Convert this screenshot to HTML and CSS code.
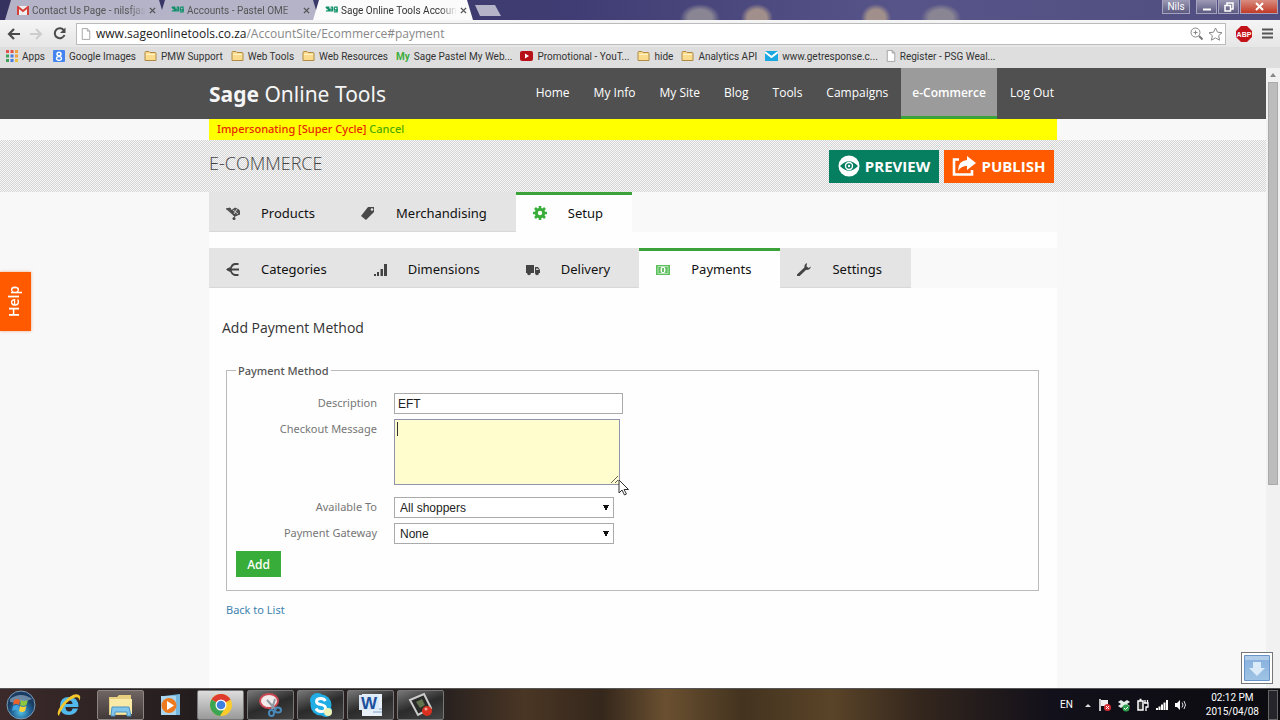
FILE: index.html
```
<!DOCTYPE html>
<html lang="en">
<head>
    <meta charset="UTF-8">
    <meta name="viewport" content="width=device-width, initial-scale=1.0">
    <title>Sage Online Tools Accounts</title>
    <link rel="stylesheet" href="styles.css">
</head>
<body>
    <!-- shared icons -->
    <svg class="hidden">
        <symbol id="folder" viewBox="0 0 12 12"><path d="M.5 10.500V2.500q0-1 1-1h3l1 1h5q1 0 1 1v7z" fill="#fadc8c" stroke="#b08a45"/><path d="M1.500 4.500h9" stroke="#fff3c4"/></symbol>
        <symbol id="doc" viewBox="0 0 12 14"><path d="M1.500.5h6l3 3v10h-9zM7.500.5v3h3" fill="#fff" stroke="#999"/></symbol>
        <symbol id="sage" viewBox="0 0 14 8"><path d="M1 1h3v1H2l2 1.500V5H1M6 1h2v4H5V3h3M10 1h3v5H9.500M12 4h-2V1M14 4h-3" fill="none" stroke="#109068" stroke-width="1.400"/></symbol>
        <symbol id="close" viewBox="0 0 8 8"><path d="M1 1l6 6M7 1L1 7" stroke="#555" stroke-width="1.600"/></symbol>
    </svg>

    <!-- browser tabs -->
    <div class="tab-strip">
        <div class="browser-tab">
            <svg width="12" height="9" viewBox="0 0 12 9"><path d="M0 0h12v9H0z" fill="#eee"/><path d="M1 9V1l5 4 5-4v8" fill="none" stroke="#d5403a" stroke-width="2"/></svg>
            <span class="tab-title">Contact Us Page - nilsfjas</span>
            <button class="tab-close" aria-label="Close tab"><svg width="7" height="7"><use href="#close"/></svg></button>
        </div>
        <div class="browser-tab">
            <svg width="13" height="8"><use href="#sage"/></svg>
            <span class="tab-title">Accounts - Pastel OME</span>
            <button class="tab-close" aria-label="Close tab"><svg width="7" height="7"><use href="#close"/></svg></button>
        </div>
        <div class="browser-tab current">
            <svg width="13" height="8"><use href="#sage"/></svg>
            <span class="tab-title">Sage Online Tools Accoun</span>
            <button class="tab-close" aria-label="Close tab"><svg width="7" height="7"><use href="#close"/></svg></button>
        </div>
        <button class="new-tab" aria-label="New tab"></button>
        <div class="window-buttons">
            <button class="user-btn">Nils</button>
            <button aria-label="Minimize"><svg width="10" height="10"><path d="M1 6.500h8v2H1z" fill="#fff"/></svg></button>
            <button aria-label="Restore"><svg width="10" height="10"><path d="M3 3V1h6v6H7M1 3.500h5.500V9H1z" fill="none" stroke="#fff" stroke-width="1.500"/></svg></button>
            <button class="close-window" aria-label="Close"><svg width="9" height="9"><path d="M1 1l7 7M8 1L1 8" stroke="#fff" stroke-width="2"/></svg></button>
        </div>
    </div>

    <!-- address bar -->
    <div class="toolbar">
        <button aria-label="Back"><svg width="13" height="12"><path d="M13 6H2M7 1L2 6l5 5" fill="none" stroke="#4a4a4a" stroke-width="2.200"/></svg></button>
        <button aria-label="Forward"><svg width="13" height="12"><path d="M0 6h11M6 1l5 5-5 5" fill="none" stroke="#ccc" stroke-width="2"/></svg></button>
        <button aria-label="Reload"><svg width="13" height="13"><path d="M11 3.500A5 5 0 1 0 11.500 8" fill="none" stroke="#4a4a4a" stroke-width="2"/><path d="M12.500.5v5.500H7z" fill="#4a4a4a"/></svg></button>
        <div class="address">
            <svg width="10" height="12"><use href="#doc"/></svg>
            <div class="url" contenteditable="true" role="textbox" aria-label="Address" spellcheck="false">www.sageonlinetools.co.za<span>/AccountSite/Ecommerce#payment</span></div>
            <svg width="13" height="13"><circle cx="5.500" cy="5.500" r="4.500" fill="none" stroke="#888"/><path d="M9 9l3.500 3.500" stroke="#777" stroke-width="2"/><path d="M3.500 5.500h4M5.500 3.500v4" stroke="#888"/></svg>
            <svg width="15" height="14" viewBox="0 0 15 14"><path d="M7.500 1l2 4.200 4.500.5-3.400 3 1 4.500-4.100-2.300-4.100 2.300 1-4.500L1 5.700l4.500-.5z" fill="#fff" stroke="#888"/></svg>
        </div>
        <button aria-label="Adblock Plus"><svg width="16" height="16"><path d="M5 0h6l5 5v6l-5 5H5l-5-5V5z" fill="#c4121a"/><text x="8" y="11" text-anchor="middle" class="abp">ABP</text></svg></button>
        <button aria-label="Menu"><svg width="11" height="11"><path d="M0 1.500h11M0 5.500h11M0 9.500h11" stroke="#555" stroke-width="2"/></svg></button>
    </div>

    <!-- bookmarks -->
    <nav class="bookmarks" aria-label="Bookmarks">
        <a href="#"><svg width="12" height="12"><path d="M0 0h3v3H0zM4.500 0h3v3h-3z" fill="#e0524a"/><path d="M9 0h3v3H9zM9 4.500h3v3H9z" fill="#f0a23c"/><path d="M0 4.500h3v3H0zM0 9h3v3H0z" fill="#3ea05b"/><path d="M4.500 4.500h3v3h-3zM4.500 9h3v3h-3z" fill="#4a7de0"/><path d="M9 9h3v3H9z" fill="#e8c23c"/></svg>Apps</a>
        <a href="#"><svg width="12" height="12"><rect width="12" height="12" rx="1" fill="#4584f0"/><ellipse cx="6" cy="4" rx="2" ry="1.800" fill="none" stroke="#fff" stroke-width="1.500"/><ellipse cx="6" cy="8.500" rx="2.500" ry="1.800" fill="none" stroke="#fff" stroke-width="1.300"/></svg>Google Images</a>
        <a href="#"><svg width="13" height="12"><use href="#folder"/></svg>PMW Support</a>
        <a href="#"><svg width="13" height="12"><use href="#folder"/></svg>Web Tools</a>
        <a href="#"><svg width="13" height="12"><use href="#folder"/></svg>Web Resources</a>
        <a href="#"><b class="my">My</b>Sage Pastel My Web...</a>
        <a href="#"><svg width="13" height="10"><rect width="13" height="10" rx="2" fill="#b81218"/><path d="M5 2.500v5L9 5z" fill="#fff"/></svg>Promotional - YouT...</a>
        <a href="#"><svg width="13" height="12"><use href="#folder"/></svg>hide</a>
        <a href="#"><svg width="13" height="12"><use href="#folder"/></svg>Analytics API</a>
        <a href="#"><svg width="13" height="10"><path d="M0 0h13v10H0z" fill="#1ba7df"/><path d="M0 1l6.500 5L13 1" fill="none" stroke="#fff" stroke-width="1.800"/></svg>www.getresponse.c...</a>
        <a href="#"><svg width="10" height="12"><use href="#doc"/></svg>Register - PSG Weal...</a>
    </nav>

    <div class="viewport">
        <div class="site">
            <header class="site-header">
                <div class="container header-row">
                    <div class="logo"><b>Sage</b> Online Tools</div>
                    <nav class="main-nav">
                        <a href="#">Home</a>
                        <a href="#">My Info</a>
                        <a href="#">My Site</a>
                        <a href="#">Blog</a>
                        <a href="#">Tools</a>
                        <a href="#">Campaigns</a>
                        <a href="#" class="active">e-Commerce</a>
                        <a href="#">Log Out</a>
                    </nav>
                </div>
            </header>

            <div class="container notice">Impersonating [Super Cycle] <a href="#">Cancel</a></div>

            <div class="title-bar">
                <div class="container title-row">
                    <h1>E-COMMERCE</h1>
                    <div class="actions">
                        <button class="preview-btn">
                            <svg width="22" height="22"><circle cx="11" cy="11" r="10.500" fill="#fff"/><path d="M2 11q9-9.500 18 0-9 9.500-18 0z" fill="#067e60"/><circle cx="11" cy="11" r="4.200" fill="#fff"/><circle cx="11" cy="11" r="2.800" fill="#067e60"/><circle cx="11" cy="11" r="1.200" fill="#fff"/></svg>
                            PREVIEW
                        </button>
                        <button class="publish-btn">
                            <svg width="24" height="22"><path d="M7 4.500H2v15h18V15" fill="none" stroke="#fff" stroke-width="2.600"/><path d="M15 1l9 7-9 7v-4q-6 0-9 5Q6 5.500 15 5z" fill="#fff"/></svg>
                            PUBLISH
                        </button>
                    </div>
                </div>
            </div>

            <main class="container content">
                <nav class="tabs">
                    <a href="#"><svg width="14" height="14"><path d="M0 3l4-1 5 9M5 5l4-3 4 2 1 4-5 2z" fill="#555" stroke="#444"/><circle cx="8" cy="12.500" r="1.500" fill="#444"/><path d="M7 4l5 4M11 3L8 8" stroke="#ccc"/></svg>Products</a>
                    <a href="#"><svg width="14" height="14"><path d="M7 1h6v5l-8 8-5-4z" fill="#484848"/><circle cx="11" cy="3.500" r="1.300" fill="#e5e5e5"/></svg>Merchandising</a>
                    <a href="#" class="active"><svg width="14" height="14"><circle cx="7" cy="7" r="3.700" fill="none" stroke="#39ad39" stroke-width="3"/><path d="M7 0v2.500M7 11.500V14M0 7h2.500M11.500 7H14M2 2l2 2M10 10l2 2M2 12l2-2M10 4l2-2" stroke="#39ad39" stroke-width="2.600"/></svg>Setup</a>
                </nav>
                <nav class="tabs">
                    <a href="#"><svg width="14" height="14"><path d="M1 7.500h12M12.500 2H9Q5.500 2.500 4.500 7.500 5.500 12.500 9 13h3.500" fill="none" stroke="#444" stroke-width="1.800"/><path d="M0 7.500l4-2.500v5z" fill="#444"/></svg>Categories</a>
                    <a href="#"><svg width="14" height="14"><path d="M1 12h2v2H1zM4 10h2v4H4zM7.500 7H10v7H7.500zM11 2h3v12h-3z" fill="#444"/></svg>Dimensions</a>
                    <a href="#"><svg width="14" height="14"><path d="M0 3h8v8H0zM9 5h3l2 3v3H9z" fill="#444"/><circle cx="3" cy="11.500" r="1.800" fill="#444"/><circle cx="11" cy="11.500" r="1.800" fill="#444"/><path d="M10 6.500h2l1 1.500h-3z" fill="#ccc"/></svg>Delivery</a>
                    <a href="#" class="active"><svg width="14" height="14"><path d="M0 3h14v10H0z" fill="#5cbf5c"/><path d="M2 4.500h10v7H2z" fill="none" stroke="#b5e3b5"/><ellipse cx="7" cy="8" rx="2.500" ry="3.200" fill="#fff"/><path d="M7 6v4" stroke="#39ad39" stroke-width="1.500"/></svg>Payments</a>
                    <a href="#"><svg width="14" height="14"><path d="M1.500 13L9 6" stroke="#444" stroke-width="3" stroke-linecap="round"/><path d="M10 1Q7 2 7.500 5.500L9.500 8Q13 8 14 4.500L11.500 6 9.500 4.500z" fill="#444"/></svg>Settings</a>
                </nav>

                <h2>Add Payment Method</h2>

                <form class="payment-form">
                    <fieldset>
                        <legend>Payment Method</legend>
                        <div class="field">
                            <label for="description">Description</label>
                            <input type="text" id="description" value="EFT">
                        </div>
                        <div class="field">
                            <label for="message">Checkout Message</label>
                            <textarea id="message"></textarea>
                        </div>
                        <div class="field">
                            <label for="available">Available To</label>
                            <select id="available"><option>All shoppers</option></select>
                        </div>
                        <div class="field">
                            <label for="gateway">Payment Gateway</label>
                            <select id="gateway"><option>None</option></select>
                        </div>
                        <button type="submit" class="add-btn">Add</button>
                    </fieldset>
                    <a href="#" class="back-link">Back to List</a>
                </form>
            </main>
        </div>
        <div class="scrollbar">
            <svg width="8" height="14"><path d="M1 9l3-4 3 4z" fill="#888"/></svg>
            <div class="thumb"></div>
        </div>

        <button class="help-btn">Help</button>
        <button class="drop-box" aria-label="Download"><svg width="26" height="26"><defs><linearGradient id="sky" x2="0" y2="1"><stop stop-color="#86aede"/><stop offset="1" stop-color="#9fc4e4"/></linearGradient></defs><path d="M.5.5h25v25H.5z" fill="url(#sky)" stroke="#6a94c8"/><path d="M1 1h24v4H1z" fill="#b2cdea"/><path d="M9 7h8v6h4l-8 8-8-8h4z" fill="#dcebf8"/></svg></button>
        <svg class="pointer" width="12" height="18" viewBox="0 0 12 18"><path d="M1 1v13l3-3 2.500 5 2-1L6 10.500h4.500z" fill="#fff" stroke="#333"/></svg>
    </div>

    <!-- taskbar -->
    <footer class="taskbar">
        <button class="task plain start" aria-label="Start"><svg width="30" height="30"><defs><radialGradient id="orb" cy=".75"><stop stop-color="#58c3e8"/><stop offset=".6" stop-color="#22679b"/><stop offset="1" stop-color="#1b3c62"/></radialGradient></defs><circle cx="15" cy="15" r="14" fill="url(#orb)" stroke="#7b9bb5"/><path d="M4 9q11-8 22 0-11 5-22 3z" fill="#b9d3e5" opacity=".5"/><path d="M8 10q3-2 6 0l-1 5q-3-2-6 0z" fill="#e8632c"/><path d="M15 10q3 2 7 0l-1.500 5q-3 2-6.500 0z" fill="#8dc63f"/><path d="M7 16q3-2 6 0l-1 5q-3-2-6 0z" fill="#43a5e0"/><path d="M14 16q3 2 6.500 0L19 21q-3 2-6 0z" fill="#fdd13a"/></svg></button>
        <button class="task plain" aria-label="Internet Explorer"><svg width="26" height="26"><path d="M22 16.500Q20 23 13 23q-9 0-9-9t9-9q9.500 0 9.500 10H9.500q0 4.500 4 4.500 2.500 0 3-3zM9.500 12h7q0-3.500-3.500-3.500T9.500 12z" fill="#52b9ec"/><path d="M3 24Q-1 21 7 11 17 0 23 3q2.500 1.500 0 6 .5-4.500-4-3.500Q10 9 5 19q-2 4-2 5z" fill="#f5c72c"/></svg></button>
        <button class="task open" aria-label="Explorer"><svg width="28" height="24"><path d="M2 4h8l2-2h12v20H2z" fill="#e8cf7f"/><path d="M3 6h22v15H3z" fill="#f9eba7"/><path d="M5 14h17l2 9h-4v-4H8v4H4z" fill="#82c6ec" stroke="#4b93c4"/></svg></button>
        <button class="task plain" aria-label="Media Player"><svg width="24" height="24"><path d="M5 3l16-2v21H5z" fill="#76b7df"/><path d="M2 3h15v19H2z" fill="#a9d5ee"/><circle cx="10" cy="12.500" r="7.500" fill="#ee7a20"/><path d="M8 8v9l7-4.500z" fill="#fff"/></svg></button>
        <button class="task light" aria-label="Chrome"><svg width="24" height="24"><circle cx="12" cy="12" r="11" fill="#fbcb2c"/><path d="M12 12L2.500 6.500a11 11 0 0 1 19 0z" fill="#df3a2e"/><path d="M12 12L2.500 6.500A11 11 0 0 0 11 23l5.500-9z" fill="#3ba553"/><circle cx="12" cy="12" r="5.500" fill="#fff"/><circle cx="12" cy="12" r="4.300" fill="#3e7fe0"/></svg></button>
        <button class="task" aria-label="Snipping Tool"><svg width="26" height="26"><ellipse cx="11" cy="9" rx="9" ry="7" fill="#f1e9ea" stroke="#c84853" stroke-width="2"/><path d="M9 8l9 10M17 7l-3 10" stroke="#8d9aa3" stroke-width="2"/><ellipse cx="20" cy="18" rx="3" ry="2.500" fill="none" stroke="#4a8bbb" stroke-width="2"/><ellipse cx="13.500" cy="21" rx="2.500" ry="3" fill="none" stroke="#4a8bbb" stroke-width="2"/></svg></button>
        <button class="task" aria-label="Skype"><svg width="26" height="26"><rect x="2" y="1" width="15" height="15" rx="7.500" fill="#22aee5"/><circle cx="13" cy="13" r="10.500" fill="#22aee5"/><circle cx="18" cy="19" r="6" fill="#22aee5"/><path d="M17.500 9Q16 6.500 13 6.500q-4.500 0-4.500 3 0 2.500 4.500 3.200 4.500.8 4.500 3.500 0 3.300-4.500 3.300-3.500 0-5-3" fill="none" stroke="#fff" stroke-width="2.800"/><circle cx="20" cy="20" r="4" fill="#eef3b8"/></svg></button>
        <button class="task" aria-label="Word"><svg width="26" height="26"><path d="M4 2h20v22H4z" fill="#e9f0f8"/><path d="M15 17h9M15 20h9" stroke="#7fa0c8"/><path d="M1 3h20v15H1z" fill="#dbe8f6"/><text x="11" y="17" text-anchor="middle" class="word">W</text></svg></button>
        <button class="task" aria-label="Recorder"><svg width="26" height="26"><path d="M2 8l14-6 7 14-13 7z" fill="#282b28" stroke="#ccc" stroke-width="2"/><path d="M8 10l6-3 3 6-5 3z" fill="#62724d"/><circle cx="19" cy="19" r="5" fill="#d9301f"/><circle cx="18" cy="17" r="1.500" fill="#f5a497"/></svg></button>
        <div class="tray">
            <span class="lang">EN</span>
            <svg width="8" height="12"><path d="M1 8l3-3 3 3z" fill="#ddd"/></svg>
            <svg width="12" height="14"><path d="M1 1v12" stroke="#fff" stroke-width="1.500"/><path d="M2 2h7v6H2z" fill="#eee"/><circle cx="8.500" cy="9.500" r="3.500" fill="#d42d35"/><path d="M7 8l3 3M10 8l-3 3" stroke="#fff"/></svg>
            <svg width="12" height="14"><path d="M0 4l3-2 3 2 3-2 3 2-3 2 3 2-3 2-3-2-3 2-3-2 3-2z" fill="#e2efe8"/><circle cx="8" cy="10" r="3.500" fill="#2da04d"/><path d="M6 10l1.500 1.500L10 9" fill="none" stroke="#fff"/></svg>
            <svg width="12" height="14"><path d="M1 3h5v9H1zM2.500 1.500h2" fill="#333" stroke="#fff" stroke-width="1.500"/><path d="M7 5h4v4H9v4M8 2v3M10.500 2v3" fill="none" stroke="#fff" stroke-width="1.300"/></svg>
            <svg width="12" height="14"><path d="M0 10h2v2H0zM2.500 8.500h2V12h-2zM5 6.500h2V12H5zM7.500 4.500h2V12h-2zM10 2h2v10h-2z" fill="#fff"/></svg>
            <svg width="12" height="14"><path d="M0 5h2l3-3v10L2 9H0z" fill="#fff"/><path d="M7 4.500q2 2.500 0 5M9 3q3 4 0 8" fill="none" stroke="#ddd"/></svg>
            <div class="clock">02:12 PM<br>2015/04/08</div>
        </div>
        <button class="show-desktop" aria-label="Show desktop"></button>
    </footer>
</body>
</html>
```
FILE: styles.css
```
* {
    box-sizing: border-box;
}
body {
    margin: 0;
    height: 100vh;
    display: flex;
    flex-direction: column;
    overflow: hidden;
    font-family: "Open Sans", sans-serif;
    font-size: 12px;
    background: #f8f8f8;
}
button {
    font-family: inherit;
    border: none;
    padding: 0;
    background: none;
    cursor: pointer;
}
a {
    text-decoration: none;
}
svg {
    flex: none;
    display: block;
}
.hidden {
    display: none;
}

/* browser window */
.tab-strip {
    display: flex;
    height: 20px;
    padding-left: 5px;
    font-family: Roboto, sans-serif;
    background:
        radial-gradient(ellipse 20px 14px at 700px 18px, #8a8593 60%, transparent),
        radial-gradient(ellipse 16px 14px at 757px 18px, #a08f8a 60%, transparent),
        radial-gradient(ellipse 15px 14px at 876px 18px, #a08f8a 60%, transparent),
        radial-gradient(ellipse 20px 14px at 941px 18px, #8a8593 60%, transparent),
        linear-gradient(90deg, #35325f, #403d74 45%, #575489 70%, #504e80);
}
.browser-tab {
    display: flex;
    align-items: center;
    gap: 3px;
    width: 160px;
    margin-right: -6px;
    padding: 0 9px 0 12px;
    font-size: 10px;
    color: #555;
    background: #b4b3c8;
    clip-path: polygon(6px 0, 154px 0, 100% 100%, 0 100%);
}
.browser-tab.current {
    background: #fbfbfb;
    color: #333;
}
.tab-title {
    flex: 1;
    white-space: nowrap;
    mask-image: linear-gradient(90deg, #000 85%, transparent);
}
.new-tab {
    width: 26px;
    height: 11px;
    margin: 5px 0 0 8px;
    background: #b4b3c8;
    clip-path: polygon(0 0, 20px 0, 100% 100%, 5px 100%);
}
.window-buttons {
    display: flex;
    gap: 1px;
    height: 14px;
    margin-left: auto;
    padding-right: 2px;
}
.window-buttons button {
    display: flex;
    align-items: center;
    justify-content: center;
    width: 21px;
    background: linear-gradient(#9c9ab5, #5c5a80);
    border: 1px solid #a5a3bd;
    border-top: none;
}
.window-buttons .user-btn {
    width: 28px;
    margin-right: 5px;
    font-size: 10px;
    color: #fff;
}
.window-buttons .close-window {
    width: 38px;
    background: linear-gradient(#d98c80, #c23a26);
}
.toolbar {
    display: flex;
    align-items: center;
    gap: 10px;
    height: 27px;
    padding: 2px 7px;
    background: linear-gradient(#f5f5f5, #e6e6e6);
}
.address {
    flex: 1;
    display: flex;
    align-items: center;
    gap: 5px;
    height: 22px;
    padding: 0 2px 0 4px;
    background: #fff;
    border: 1px solid #bbb;
}
.url {
    flex: 1;
    font-size: 12px;
    color: #222;
}
.url span {
    color: #888;
}
.abp {
    font: bold 7px "Liberation Sans", sans-serif;
    fill: #fff;
}
.bookmarks {
    display: flex;
    align-items: center;
    gap: 8px;
    height: 21px;
    padding: 0 6px 3px;
    background: #dedede;
}
.bookmarks a {
    display: flex;
    align-items: center;
    gap: 4px;
    font-family: Roboto, sans-serif;
    font-size: 10px;
    color: #333;
    white-space: nowrap;
}
.my {
    color: #3fae3f;
}

/* page */
.viewport {
    position: relative;
    flex: 1;
    display: flex;
    min-height: 0;
}
.site {
    flex: 1;
    display: flex;
    flex-direction: column;
}
.container {
    width: 100%;
    max-width: 848px;
    margin: 0 auto;
}
.site-header {
    height: 51px;
    background: #505050;
}
.header-row {
    display: flex;
    justify-content: space-between;
    height: 100%;
}
.logo {
    font-size: 21px;
    line-height: 53px;
    color: #f5f5f5;
    font-family: "Noto Sans", sans-serif;
}
.main-nav {
    display: flex;
    gap: 2px;
}
.main-nav a {
    padding: 0 11px;
    font-size: 12px;
    line-height: 50px;
    color: #fff;
}
.main-nav a:last-child {
    padding-right: 3px;
}
.main-nav .active {
    background: #9b9b9b;
    border-bottom: 3px solid #39a339;
    font-weight: 600;
}
.notice {
    height: 21px;
    padding-left: 8px;
    font-family: "Noto Sans", sans-serif;
    font-size: 11px;
    font-weight: 500;
    line-height: 20px;
    color: #e62600;
    background: #ff0;
}
.notice a {
    color: #4da800;
}
.title-bar {
    background: repeating-conic-gradient(#d4d4d4 0 25%, #f8f8f8 0 50%) 0 0 / 2px 2px;
}
.title-row {
    display: flex;
    justify-content: space-between;
    height: 52px;
    padding-right: 3px;
}
h1 {
    margin: 0;
    font-size: 18px;
    font-weight: 300;
    line-height: 46px;
    color: #444;
}
.actions {
    display: flex;
    align-items: center;
    gap: 5px;
}
.actions button {
    display: flex;
    align-items: center;
    justify-content: center;
    gap: 5px;
    width: 110px;
    height: 33px;
    font-size: 15px;
    font-weight: 700;
    color: #fff;
}
.preview-btn {
    background: #067e60;
}
.publish-btn {
    background: #ff5a00;
}
.content {
    flex: 1;
    background: #fefefe;
}
.tabs {
    display: flex;
    height: 40px;
    margin-bottom: 16px;
    background: #f9f9f9;
}
.tabs a {
    display: flex;
    align-items: center;
    gap: 21px;
    padding: 0 29px 1px 17px;
    font-family: "Noto Sans", sans-serif;
    font-size: 13px;
    color: #111;
    background: #e4e4e4;
    border-top: 3px solid #e4e4e4;
    border-bottom: 1px solid #d8d8d8;
}
.tabs .active {
    background: #fefefe;
    border-top-color: #39a339;
    border-bottom-color: #fefefe;
}
h2 {
    margin: 30px 0 0 13px;
    font-size: 14px;
    font-weight: 400;
    line-height: 20px;
    color: #333;
}
.payment-form {
    padding: 24px 18px 0 17px;
    font-family: "Noto Sans", sans-serif;
    font-size: 11px;
}
fieldset {
    margin: 0;
    padding: 14px 9px 13px;
    border: 1px solid #bbb;
}
legend {
    padding: 0 2px;
    font-weight: 500;
    line-height: 17px;
    color: #555;
}
.field {
    display: flex;
    gap: 17px;
    margin-bottom: 5px;
}
.field label {
    width: 141px;
    line-height: 20px;
    text-align: right;
    color: #777;
}
.field input,
.field textarea,
.field select {
    border: 1px solid #aaa;
    font-family: "Liberation Sans", sans-serif;
    font-size: 12px;
    color: #222;
}
.field input {
    width: 229px;
    height: 21px;
    padding: 0 3px;
}
.field textarea {
    width: 226px;
    height: 66px;
    margin-bottom: 7px;
    border-color: #8f93ad;
    /* caret */
    background: linear-gradient(#333, #333) 2px 2px / 1px 14px no-repeat #fffccd;
}
.field select {
    width: 220px;
    height: 21px;
    padding: 0 5px;
    appearance: none;
    /* dropdown arrow from two halves */
    background: linear-gradient(to bottom left, #111 50%, transparent 51%) right 7px center / 3px 6px no-repeat,
        linear-gradient(to bottom right, #111 50%, transparent 51%) right 4px center / 3px 6px no-repeat #fff;
}
.add-btn {
    width: 45px;
    height: 26px;
    margin-top: 2px;
    background: #39ad39;
    color: #fff;
    font-size: 12px;
    font-weight: 500;
}
.back-link {
    display: inline-block;
    margin-top: 11px;
    color: #3f83ad;
}

.scrollbar {
    display: flex;
    flex-direction: column;
    align-items: center;
    width: 14px;
    background: #f1f1f1;
}
.thumb {
    width: 10px;
    height: 65%;
    background: #bcbcbc;
    border: 1px solid #aaa;
}
.help-btn {
    position: absolute;
    left: 0;
    top: 204px;
    width: 31px;
    height: 59px;
    padding-left: 4px;
    writing-mode: vertical-rl;
    transform: rotate(180deg);
    font-size: 14px;
    font-weight: 600;
    color: #fff;
    background: #ff5a00;
    box-shadow: 0 0 3px #e9a98a;
}
.drop-box {
    position: absolute;
    right: 7px;
    bottom: 4px;
    padding: 2px;
    background: #fff;
    border: 1px solid #777;
}
.pointer {
    position: absolute;
    left: 618px;
    top: 411px;
}

/* taskbar */
.taskbar {
    display: flex;
    align-items: center;
    gap: 3px;
    height: 32px;
    padding: 0 2px 0 0;
    color: #fff;
    border-top: 1px solid #555;
    background: linear-gradient(90deg, #3c2a2a, #241d1e 15%, #2a2220 35%, #4a3624 41%, #35271c 47%, #6a5030 52%, #43331f 58%, #5a4428 65%, #33261d 72%, #12101a 82%, #0b0b10);
}
.task {
    display: flex;
    align-items: center;
    justify-content: center;
    width: 47px;
    height: 30px;
    border: 1px solid #777;
    border-radius: 2px;
    background: linear-gradient(160deg, #777, #2b2b2b 50%, #444);
}
.task.plain {
    border: none;
    background: none;
}
.task.start {
    width: 42px;
}
.task.open {
    margin-left: 2px;
    border-color: #8d8583;
    background: linear-gradient(#6f6562, #42393a);
}
.task.light {
    background: linear-gradient(#ddd, #999);
}
.word {
    font: bold 17px "Liberation Sans", sans-serif;
    fill: #1c4f9c;
}
.tray {
    display: flex;
    align-items: center;
    gap: 7px;
    margin-left: auto;
    font-family: Roboto, sans-serif;
    font-size: 10px;
}
.lang {
    margin-right: 4px;
}
.clock {
    margin: 0 6px 0 12px;
    line-height: 14px;
    text-align: center;
}
.show-desktop {
    width: 10px;
    height: 30px;
    background: #25252b;
    border: 1px solid #666;
}
```
